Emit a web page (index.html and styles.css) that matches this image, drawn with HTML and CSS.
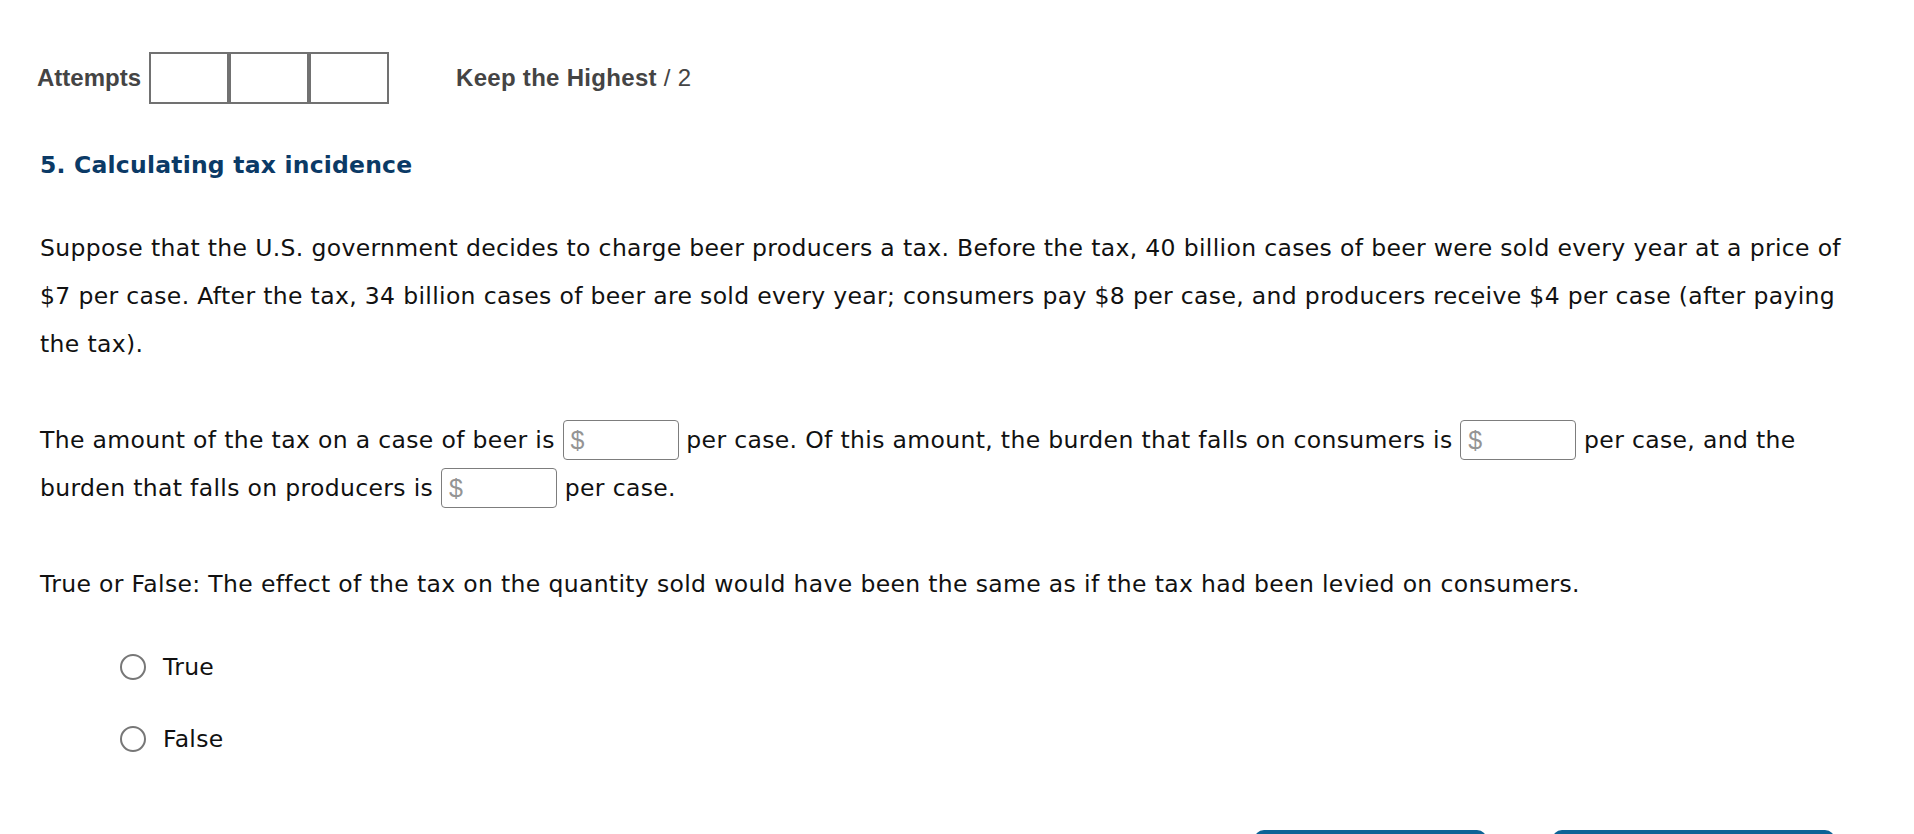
FILE: index.html
```html
<!DOCTYPE html>
<html lang="en">
<head>
<meta charset="utf-8">
<title>Calculating tax incidence</title>
<link rel="stylesheet" href="styles.css">
</head>
<body>
<div class="page">
  <div class="attempts-row">
    <span class="attempts-label">Attempts</span>
    <div class="attempt-boxes">
      <span class="attempt-box"></span>
      <span class="attempt-box"></span>
      <span class="attempt-box"></span>
    </div>
    <span class="keep"><b>Keep the Highest</b> / 2</span>
  </div>

  <h2 class="q-title">5. Calculating tax incidence</h2>

  <p class="q-text q-intro">Suppose that the U.S. government decides to charge beer producers a tax. Before the tax, 40 billion cases of beer were sold every year at a price of $7 per case. After the tax, 34 billion cases of beer are sold every year; consumers pay $8 per case, and producers receive $4 per case (after paying the tax).</p>

  <p class="q-text q-gap">The amount of the tax on a case of beer is <span class="answer"><span class="cur">$</span></span> per case. Of this amount, the burden that falls on consumers is <span class="answer"><span class="cur">$</span></span> per case, and the burden that falls on producers is <span class="answer"><span class="cur">$</span></span> per case.</p>

  <p class="q-text q-gap">True or False: The effect of the tax on the quantity sold would have been the same as if the tax had been levied on consumers.</p>

  <ul class="options">
    <li class="option"><span class="radio"></span><span>True</span></li>
    <li class="option"><span class="radio"></span><span>False</span></li>
  </ul>

  <div class="actions">
    <button class="btn btn-grade">Grade It Now</button>
    <button class="btn btn-save">Save &amp; Continue</button>
  </div>
</div>
</body>
</html>
```

FILE: styles.css
```css
html, body {
  margin: 0;
  padding: 0;
  background: #ffffff;
}

body {
  font-family: "DejaVu Sans", Verdana, sans-serif;
  color: #111111;
}

.page {
  padding: 52px 0 0 40px;
  width: 1825px;
}

.attempts-row {
  display: flex;
  align-items: center;
  height: 52px;
  margin-left: -3px;
  font-family: "Liberation Sans", Arial, sans-serif;
  color: #444444;
  font-size: 24px;
}

.attempts-label {
  font-weight: bold;
  margin-right: 8px;
}

.attempt-boxes {
  display: flex;
}

.attempt-box {
  width: 76px;
  height: 48px;
  border: 2px solid #717171;
}

.keep {
  margin-left: 67px;
  letter-spacing: 0.3px;
}

.q-title {
  margin: 46px 0 0;
  font-size: 23.5px;
  letter-spacing: 0.2px;
  line-height: 30px;
  font-weight: bold;
  color: #0b3a66;
}

.q-text {
  font-size: 23.5px;
  letter-spacing: 0.34px;
  line-height: 48px;
}

.q-intro {
  margin: 44px 0 0;
}

.q-gap {
  margin: 48px 0 0;
}

.answer {
  display: inline-flex;
  align-items: center;
  box-sizing: border-box;
  width: 116px;
  height: 40px;
  padding-left: 7px;
  border: 1px solid #7d7d7d;
  border-radius: 4px;
  vertical-align: middle;
  margin-top: -4px;
  letter-spacing: 0;
}

.cur {
  font-family: "Liberation Sans", Arial, sans-serif;
  color: #949494;
  font-size: 25px;
}

.options {
  list-style: none;
  margin: 35px 0 0;
  padding: 0 0 0 80px;
}

.option {
  display: flex;
  align-items: center;
  gap: 17px;
  font-size: 23.5px;
  letter-spacing: 0.3px;
  line-height: 48px;
  margin-bottom: 24px;
}

.radio {
  box-sizing: border-box;
  width: 26px;
  height: 26px;
  border: 2px solid #777777;
  border-radius: 50%;
  background: #ffffff;
}

.actions {
  display: flex;
  justify-content: flex-end;
  gap: 65px;
  margin-top: 67px;
  padding-right: 30px;
}

.btn {
  border: none;
  border-radius: 10px;
  background: #0c6396;
  color: #ffffff;
  font-family: "DejaVu Sans", Verdana, sans-serif;
  font-size: 20px;
  height: 56px;
}

.btn-grade {
  width: 233px;
}

.btn-save {
  width: 283px;
}
```
